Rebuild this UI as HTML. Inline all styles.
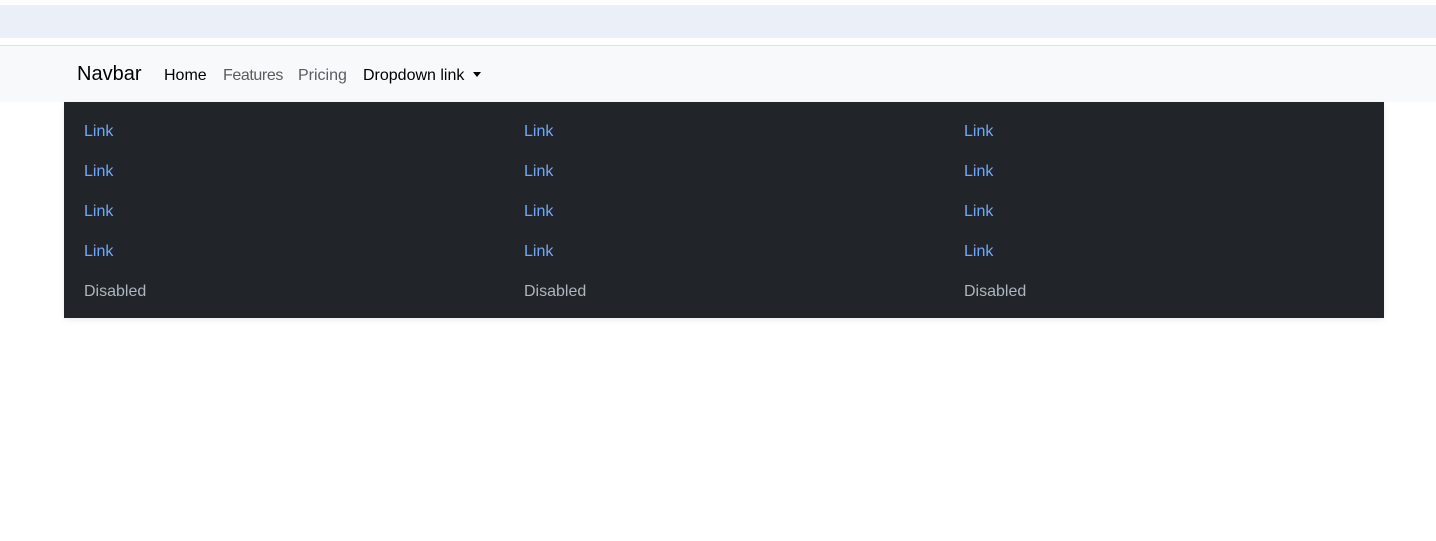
<!DOCTYPE html>
<html><head><style>
*{margin:0;padding:0;box-sizing:border-box}
body{width:1436px;height:541px;background:#fff;font-family:"Liberation Sans",sans-serif;font-size:16px;position:relative;overflow:hidden}
.top{position:absolute;top:5px;left:0;width:1436px;height:33px;background:#ebf0f8}
.nav{position:absolute;top:45px;left:0;width:1436px;height:57px;background:#f8f9fa;border-top:1px solid #dee2e6}
.nav span{position:absolute;top:20px;line-height:20px}
.brand{font-size:20px;left:77px;color:#000}
.panel{position:absolute;left:64px;top:102px;width:1320px;height:216px;background:#212529;box-shadow:0 2px 6px rgba(0,0,0,.08)}
.col{position:absolute;top:20px}
.col div{height:40px;line-height:20px;color:#6ea8fe}
.col div.d{color:#adb5bd}
.caret{display:inline-block;border-left:4px solid transparent;border-right:4px solid transparent;border-top:5px solid #000;vertical-align:3px;margin-left:9px}
</style></head><body>
<div class="top"></div>
<div class="nav">
<span class="brand" style="top:18px">Navbar</span>
<span style="left:164px;color:#000">Home</span>
<span style="left:223px;color:#595c5f;letter-spacing:-0.4px">Features</span>
<span style="left:298px;color:#595c5f">Pricing</span>
<span style="left:363px;color:#000">Dropdown link<i class="caret"></i></span>
</div>
<div class="panel">
<div class="col" style="left:20px"><div>Link</div><div>Link</div><div>Link</div><div>Link</div><div class="d">Disabled</div></div>
<div class="col" style="left:460px"><div>Link</div><div>Link</div><div>Link</div><div>Link</div><div class="d">Disabled</div></div>
<div class="col" style="left:900px"><div>Link</div><div>Link</div><div>Link</div><div>Link</div><div class="d">Disabled</div></div>
</div>
</body></html>
